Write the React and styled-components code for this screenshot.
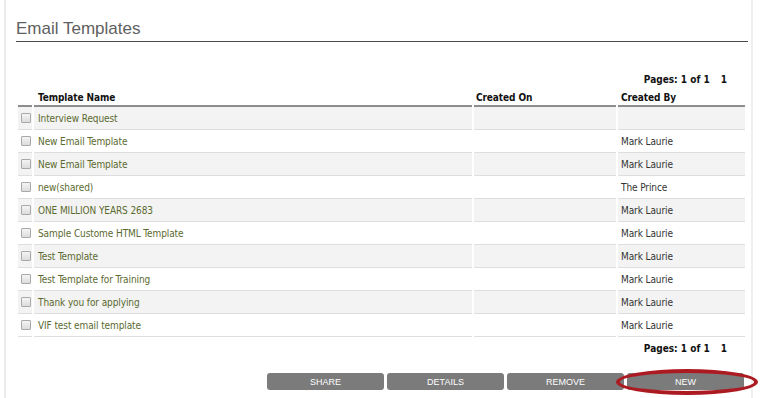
import React from "react";
import styled, { createGlobalStyle } from "styled-components";

const GlobalStyle = createGlobalStyle`
    html, body {
        margin: 0;
        padding: 0;
        background: #ffffff;
    }
`;

const Page = styled.div`
    width: 764px;
    height: 398px;
    overflow: hidden;
    background: #ffffff;
    font-family: "DejaVu Sans Condensed", "DejaVu Sans", sans-serif;
`;

const Panel = styled.main`
    margin-left: 4px;
    width: 749px;
    height: 398px;
    box-sizing: border-box;
    border-left: 2px solid #ececec;
    border-right: 2px solid #efefef;
    padding: 17px 3px 0 10px;
`;

const Title = styled.h1`
    margin: 0;
    padding: 0 0 1px 0;
    font-family: "Liberation Sans", sans-serif;
    font-weight: normal;
    font-size: 17px;
    line-height: 23px;
    color: #5f5f5f;
    border-bottom: 1px solid #4a4a4a;
`;

const Pager = styled.div`
    display: flex;
    justify-content: flex-end;
    gap: 11px;
    padding-right: 21px;
    font-size: 10px;
    font-weight: bold;
    color: #111;
    line-height: 14px;
    margin-top: ${(p) => p.$top}px;
`;

const Table = styled.table`
    margin-top: 3px;
    width: 731px;
    border-collapse: separate;
    border-spacing: 2px 0;
    font-size: 10px;
    letter-spacing: -0.1px;
`;

const HeadCell = styled.th`
    text-align: left;
    font-weight: bold;
    color: #111;
    height: 15px;
    padding: 0 0 0 ${(p) => p.$pad}px;
    border-bottom: 2px solid #8d8d8d;
    width: ${(p) => p.$w}px;
`;

const Row = styled.tr`
    background: ${(p) => (p.$alt ? "#f3f3f3" : "#ffffff")};
`;

const Cell = styled.td`
    height: 22px;
    padding: 0 0 0 ${(p) => p.$pad}px;
    border-bottom: 1px solid #dedede;
    color: ${(p) => (p.$name ? "#5b6a2f" : "#333333")};
    white-space: nowrap;
`;

const Check = styled.span`
    display: block;
    width: 8px;
    height: 8px;
    margin-left: 3px;
    border: 1px solid #a9a9a9;
    border-radius: 1px;
    background: linear-gradient(#f4f4f4, #dcdcdc);
`;

const Buttons = styled.div`
    display: flex;
    justify-content: flex-end;
    gap: 3px;
    margin-top: 17px;
    padding-right: 4px;
`;

const Button = styled.button`
    position: relative;
    width: 117px;
    height: 17px;
    padding: 0;
    border: none;
    border-radius: 3px;
    background: #7b7b7b;
    color: #ffffff;
    font-family: "Liberation Sans", sans-serif;
    font-size: 9px;
    text-transform: uppercase;
    cursor: pointer;
`;

const Highlight = styled.span`
    position: absolute;
    left: -11px;
    right: -14px;
    top: -4px;
    bottom: -5px;
    border: 4px solid #ad1b22;
    border-radius: 50%;
    pointer-events: none;
`;

const templates = [
    ["Interview Request", ""],
    ["New Email Template", "Mark Laurie"],
    ["New Email Template", "Mark Laurie"],
    ["new(shared)", "The Prince"],
    ["ONE MILLION YEARS 2683", "Mark Laurie"],
    ["Sample Custome HTML Template", "Mark Laurie"],
    ["Test Template", "Mark Laurie"],
    ["Test Template for Training", "Mark Laurie"],
    ["Thank you for applying", "Mark Laurie"],
    ["VIF test email template", "Mark Laurie"],
];

function App() {
    return (
        <Page>
            <GlobalStyle />
            <Panel>
                <Title>Email Templates</Title>
                <Pager $top={31}>
                    <span>Pages: 1 of 1</span>
                    <span>1</span>
                </Pager>
                <Table>
                    <thead>
                        <tr>
                            <HeadCell $w={14} $pad={0}></HeadCell>
                            <HeadCell $w={434} $pad={4}>Template Name</HeadCell>
                            <HeadCell $w={140} $pad={2}>Created On</HeadCell>
                            <HeadCell $pad={3}>Created By</HeadCell>
                        </tr>
                    </thead>
                    <tbody>
                        {templates.map(([name, by], i) => (
                            <Row key={i} $alt={i % 2 === 0}>
                                <Cell $pad={0}>
                                    <Check />
                                </Cell>
                                <Cell $pad={4} $name>{name}</Cell>
                                <Cell $pad={2}></Cell>
                                <Cell $pad={3}>{by}</Cell>
                            </Row>
                        ))}
                    </tbody>
                </Table>
                <Pager $top={5}>
                    <span>Pages: 1 of 1</span>
                    <span>1</span>
                </Pager>
                <Buttons>
                    <Button>Share</Button>
                    <Button>Details</Button>
                    <Button>Remove</Button>
                    <Button>
                        New
                        <Highlight />
                    </Button>
                </Buttons>
            </Panel>
        </Page>
    );
}

export default App;
